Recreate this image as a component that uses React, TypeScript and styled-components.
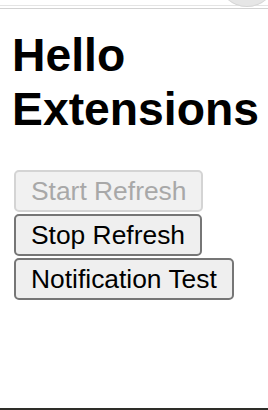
import React from 'react';
import styled, { createGlobalStyle } from 'styled-components';

const GlobalStyle = createGlobalStyle`
  html, body {
    margin: 0;
    padding: 0;
    background: #fff;
  }
  body {
    font-family: "Liberation Sans", Arial, Helvetica, sans-serif;
    color: #000;
  }
`;

const Page = styled.div`
  height: 100vh;
  box-sizing: border-box;
  display: flex;
  flex-direction: column;
  border-bottom: 2px solid #2e2e29;
  overflow: hidden;
`;

const TopEdge = styled.div`
  position: relative;
  height: 10px;
  flex: none;
  background:
    linear-gradient(#e4e4e4, #e4e4e4) 0 5px / 100% 1px no-repeat,
    linear-gradient(#d2d2d2, #d2d2d2) 0 8px / 100% 1px no-repeat;
`;

const Knob = styled.div`
  position: absolute;
  left: 218px;
  top: -51px;
  width: 58px;
  height: 58px;
  border-radius: 50%;
  background: #e6e6e6;
  box-shadow: inset 0 -1px 0 #d6d6d6;
`;

const Content = styled.main`
  padding: 18px 14px 0;
  display: flex;
  flex-direction: column;
  align-items: flex-start;
`;

const Title = styled.h1`
  margin: 0 0 34px -2px;
  font-size: 46.3px;
  font-weight: 700;
  line-height: 54px;
`;

const ButtonStack = styled.div`
  display: flex;
  flex-direction: column;
  align-items: flex-start;
  gap: 2px;
`;

const Button = styled.button`
  font-family: "Liberation Sans", Arial, Helvetica, sans-serif;
  font-size: 26.4px;
  line-height: 30px;
  padding: 4px 15px;
  border: 2px solid #767676;
  border-radius: 5px;
  background: #efefef;
  color: #000;

  &:disabled {
    border-color: #d4d4d4;
    background: #f1f1f1;
    color: #a8a8a8;
  }
`;

export default function App() {
  return (
    <>
      <GlobalStyle />
      <Page>
        <TopEdge>
          <Knob />
        </TopEdge>
        <Content>
          <Title>
            Hello
            <br />
            Extensions
          </Title>
          <ButtonStack>
            <Button disabled>Start Refresh</Button>
            <Button>Stop Refresh</Button>
            <Button>Notification Test</Button>
          </ButtonStack>
        </Content>
      </Page>
    </>
  );
}
